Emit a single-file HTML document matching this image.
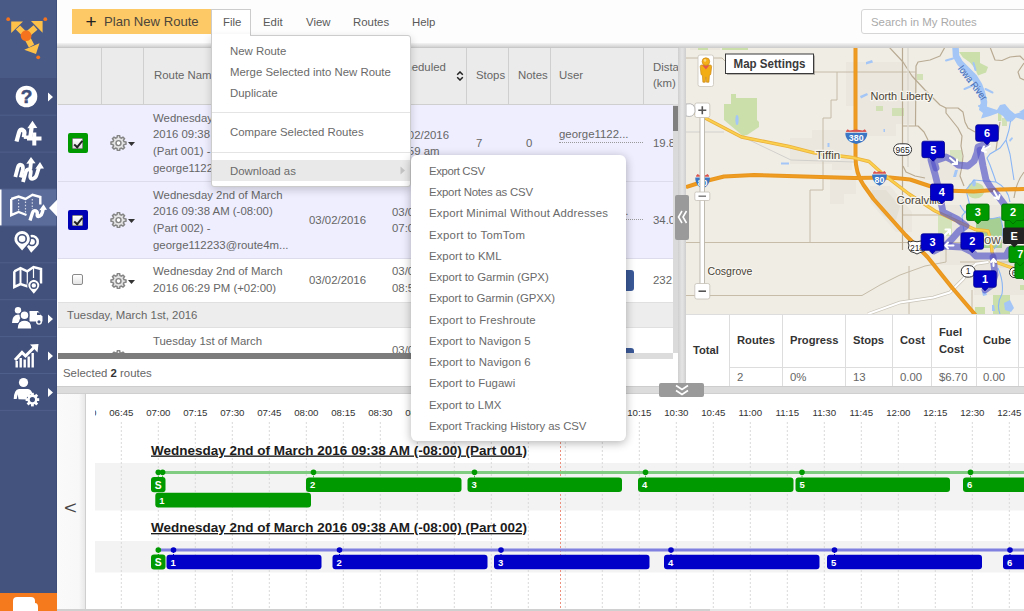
<!DOCTYPE html>
<html lang="en">
<head>
<meta charset="utf-8">
<title>Routes</title>
<style>
*{box-sizing:border-box;margin:0;padding:0}
html,body{width:1024px;height:611px;overflow:hidden;background:#fff}
body{font-family:"Liberation Sans",sans-serif;font-size:12px;color:#555;position:relative}
.abs{position:absolute}
.os{letter-spacing:0}
/* sidebar */
#side{overflow:hidden;left:0;top:0;width:57px;height:611px;background:#43537d}
#side .logo{left:0;top:0;width:58px;height:78px;background:#495a87}
#side .it{left:0;width:57px;height:37px;border-top:1px solid #4c5c88}
#side .it.act{background:#5d6c98}
#side .orange{left:0;top:593px;width:57px;height:18px;background:#f47a1f}
/* topbar */
#top{left:57px;top:0;width:967px;height:48px;background:#fdfdfd}
#top .shadow{left:0;top:43px;width:967px;height:5px;background:linear-gradient(#f4f4f4,#cacaca)}
#plan{left:72px;top:9px;width:139px;height:25px;background:#fdc866;color:#4c463a;font-size:13.1px;line-height:25px}
#filetab{left:211px;top:9px;width:40px;height:27px;background:#fff;border:1px solid #ccc;border-bottom:none}
.mi{top:9.5px;height:25px;line-height:25px;font-size:11.4px;color:#5a5a5a}
#search{left:861px;top:9px;width:170px;height:25px;border:1px solid #d6d6d6;border-radius:3px;background:#fff;color:#aaa;line-height:25px;padding-left:9px;font-size:11.4px}
/* table */
#tbl{left:57px;top:47px;width:622px;height:340px;background:linear-gradient(#c8c8c8 1px,#fff 1px);overflow:hidden}
#tblin{left:1px;top:0;width:621px;height:340px}
#thead{left:0;top:1px;width:621px;height:57px;background:#ebebeb;border-bottom:1px solid #cfcfcf;box-shadow:-1px 0 0 #ebebeb}
.vd{top:0;width:1px;height:56px;background:#cfcfcf}
.row{left:0;width:615px}
.lav{background:#eeeeff;box-shadow:-1px 0 0 #eeeeff}
.cell{position:absolute;line-height:21px;font-size:12px;color:#555;white-space:nowrap}
/* splitters */
#vsplit{left:678px;top:48px;width:8px;height:339px;background:linear-gradient(90deg,#cfcfcf,#e2e2e2 45%,#e2e2e2 60%,#cdcdcd)}
#vhandle{z-index:5;left:674.5px;top:194.5px;width:14.5px;height:45px;background:#9a9a9a;border-radius:2px;color:#fff}
#hsplit{left:57px;top:386px;width:967px;height:8px;background:#dcdcdc;border-top:1px solid #cdcdcd;border-bottom:1px solid #cfcfcf}
#hhandle{z-index:5;left:659px;top:383px;width:45px;height:14px;background:#9a9a9a;border-radius:2px}
/* map */
#map{left:686px;top:48px;width:338px;height:266px;background:#efebe2;overflow:hidden}
/* stats */
#stats{left:686px;top:314px;width:338px;height:72px;background:#fff}
/* gantt */
#gantt{left:57px;top:394px;width:967px;height:217px;background:#fff;overflow:hidden}
#gleft{left:0;top:0;width:29px;height:217px;background:linear-gradient(90deg,#fafafa 0,#f8f8f8 78%,#e8e8e8 100%);border-right:1px solid #cfcfcf}
/* menus */
#menu1{left:211px;top:35px;width:200px;height:152px;background:#fff;border:1px solid #ccc;border-radius:0 3px 3px 3px;box-shadow:0 3px 8px rgba(0,0,0,.18)}
#menu2{left:411px;top:155px;width:215px;height:286px;background:#fff;border-radius:6px;box-shadow:0 2px 10px rgba(0,0,0,.3)}
.m1{left:18px;font-size:12px;color:#666;line-height:20px;white-space:nowrap}
.m2{left:18px;font-size:12px;color:#666;line-height:20px;white-space:nowrap}

.t{font-size:11.4px;color:#666}
.u{border-bottom:1px dotted #999;line-height:15px !important;width:84px}
.cb{width:20px;height:20px;border-radius:2px}
.cb i{position:absolute;left:4px;top:5px;width:11px;height:11px;background:linear-gradient(#fff,#ddd);border:1px solid #888;border-radius:1px}
.cb i:after{content:"";position:absolute;left:2.5px;top:-0.5px;width:3px;height:6.5px;border:solid #222;border-width:0 2px 2px 0;transform:rotate(40deg)}
.cb0{width:11px;height:11px;background:linear-gradient(#fff,#e4e4e4);border:1px solid #8a8a8a;border-radius:2px}
.sb{font-size:11.200px;font-weight:bold;color:#333}
.m1,.m2{color:#6a6a6a}
</style>
</head>
<body>
<svg width="0" height="0" style="position:absolute"><defs>
<g id="gear"><path d="M7.4 0.6h2.2l.4 2 1.3.6 1.7-1.1 1.5 1.5-1.1 1.7.6 1.3 2 .4v2.2l-2 .4-.6 1.3 1.1 1.7-1.5 1.5-1.7-1.1-1.3.6-.4 2H7.400l-.4-2-1.3-.6-1.7 1.1-1.5-1.500 1.1-1.700-.6-1.300-2-.4V7l2-.4.6-1.300L2.500 3.600 4 2.100l1.700 1.100L7 2.600z" fill="#e4e4e4" stroke="#858585" stroke-width="1.500"/><circle cx="8.500" cy="8.100" r="2.500" fill="#fff" stroke="#858585" stroke-width="1.400"/><path d="M18 7h7l-3.500 4z" fill="#333"/></g>
</defs></svg>

<!-- TOP BAR -->
<div id="top" class="abs"><div class="shadow abs"></div></div>
<div id="plan" class="abs"><span class="abs" style="left:13.500px;top:-.5px;font-size:19px;color:#222">+</span><span class="abs os" style="left:32px;top:.4px;white-space:nowrap">Plan New Route</span></div>
<div id="filetab" class="abs"></div>
<div class="mi abs os" style="left:223px">File</div>
<div class="mi abs os" style="left:263px">Edit</div>
<div class="mi abs os" style="left:306px">View</div>
<div class="mi abs os" style="left:353px">Routes</div>
<div class="mi abs os" style="left:412px">Help</div>
<div id="search" class="abs os">Search in My Routes</div>

<!-- TABLE -->
<div id="tbl" class="abs"><div id="tblin" class="abs">
<div id="thead" class="abs">
 <div class="vd abs" style="left:43px"></div><div class="vd abs" style="left:85px"></div>
 <div class="vd abs" style="left:241px"></div><div class="vd abs" style="left:324px"></div>
 <div class="vd abs" style="left:408px"></div><div class="vd abs" style="left:450px"></div>
 <div class="vd abs" style="left:492px"></div><div class="vd abs" style="left:585px"></div>
 <div class="cell t" style="left:96px;top:16.8px">Route Name</div>
 <div class="cell t" style="left:251px;top:16.8px">Date</div>
 <div class="cell t" style="left:334px;top:11px;line-height:16px">Scheduled<br>For</div>
 <svg class="abs" style="left:397.5px;top:23px" width="8" height="10" viewBox="0 0 8 10"><path d="M1.2 3.800L4 1L6.800 3.800M1.200 6.200L4 9L6.800 6.200" fill="none" stroke="#222" stroke-width="1.500"/></svg>
 <div class="cell t" style="left:418px;top:16.8px">Stops</div>
 <div class="cell t" style="left:460px;top:16.8px">Notes</div>
 <div class="cell t" style="left:501px;top:16.8px">User</div>
 <div class="cell t" style="left:595px;top:11px;line-height:16px">Distance<br>(km)</div>
</div>

<!-- row 1 -->
<div class="row lav abs" style="top:58px;height:77px;border-bottom:1px solid #dcdcec">
 <div class="cb abs" style="left:10px;top:28px;background:#009a00"><i></i></div>
 <svg class="gear abs" style="left:52px;top:30px" width="26" height="16" viewBox="0 0 26 16"><use href="#gear"/></svg>
 <div class="cell t" style="left:95px;top:4.6px;line-height:16.7px">Wednesday 2nd of March<br>2016 09:38 AM (-08:00)<br>(Part 001) -<br>george112233@route4m...</div>
 <div class="cell t" style="left:251px;top:27.8px">03/02/2016</div>
 <div class="cell t" style="left:334px;top:21.5px;line-height:16.7px">03/02/2016<br>06:59 am</div>
 <div class="cell t" style="left:418px;top:27.8px">7</div>
 <div class="cell t" style="left:468px;top:27.8px">0</div>
 <div class="cell t u" style="left:501px;top:22.3px">george1122...</div>
 <div class="cell t" style="left:595px;top:27.8px">19.8</div>
</div>
<!-- row 2 -->
<div class="row lav abs" style="top:135px;height:77px;border-bottom:1px solid #dcdcec">
 <div class="cb abs" style="left:10px;top:28px;background:#0000b4"><i></i></div>
 <svg class="gear abs" style="left:52px;top:30px" width="26" height="16" viewBox="0 0 26 16"><use href="#gear"/></svg>
 <div class="cell t" style="left:95px;top:4.7px;line-height:16.7px">Wednesday 2nd of March<br>2016 09:38 AM (-08:00)<br>(Part 002) -<br>george112233@route4m...</div>
 <div class="cell t" style="left:251px;top:27.7px">03/02/2016</div>
 <div class="cell t" style="left:334px;top:21.5px;line-height:16.7px">03/02/2016<br>07:09 am</div>
 <div class="cell t" style="left:418px;top:27.7px">6</div>
 <div class="cell t" style="left:468px;top:27.7px">0</div>
 <div class="cell t u" style="left:501px;top:22.3px">george1122...</div>
 <div class="cell t" style="left:595px;top:27.7px">34.0</div>
</div>
<!-- row 3 -->
<div class="row abs" style="top:212px;height:43px;background:#fff">
 <div class="cb0 abs" style="left:14px;top:15px"></div>
 <svg class="gear abs" style="left:52px;top:14px" width="26" height="16" viewBox="0 0 26 16"><use href="#gear"/></svg>
 <div class="cell t" style="left:95px;top:4px;line-height:16.7px">Wednesday 2nd of March<br>2016 06:29 PM (+02:00)</div>
 <div class="cell t" style="left:251px;top:11px">03/02/2016</div>
 <div class="cell t" style="left:334px;top:4px;line-height:16.7px">03/02/2016<br>08:55 am</div>
 <div class="cell t" style="left:418px;top:11px">9</div>
 <div class="cell t" style="left:468px;top:11px">0</div>
 <div class="abs" style="left:501px;top:11px;width:75px;height:21px;background:#3b5998;border-radius:3px"></div>
 <div class="cell t" style="left:595px;top:11px">232.1</div>
</div>
<!-- group header -->
<div class="abs" style="left:0;top:255px;width:615px;height:26px;background:#ededed;border-top:1px solid #e0e0e0;border-bottom:1px solid #e0e0e0"><div class="cell t" style="left:9px;top:2px">Tuesday, March 1st, 2016</div></div>
<!-- row 4 -->
<div class="row abs" style="top:281px;height:30px;background:#fff">
 <svg class="gear abs" style="left:52px;top:22px" width="26" height="16" viewBox="0 0 26 16"><use href="#gear"/></svg>
 <div class="cell t" style="left:95px;top:3px">Tuesday 1st of March</div>
 <div class="cell t" style="left:334px;top:12px">03/01/2016</div>
 <div class="abs" style="left:501px;top:20px;width:75px;height:21px;background:#3b5998;border-radius:3px"></div>
</div>
<!-- scrollbars -->
<div class="abs" style="left:615px;top:57px;width:6px;height:249px;background:#dadada"></div>
<div class="abs" style="left:615px;top:59px;width:6px;height:25px;background:#808080"></div>
<div class="abs" style="left:0;top:306px;width:615px;height:6px;background:#dcdcdc"></div>
<div class="abs" style="left:0;top:306px;width:545px;height:6px;background:#7c7c7c"></div>
<!-- footer -->
<div class="abs" style="left:0;top:312px;width:621px;height:28px;background:#fff"><div class="cell t" style="left:5px;top:4px">Selected <b style="color:#333">2</b> routes</div></div>

</div></div>

<!-- MAP -->
<div id="map" class="abs">
<svg class="abs" style="left:0;top:0" width="338" height="266" viewBox="686 48 338 266" font-family="Liberation Sans, sans-serif">
<rect x="686" y="47" width="338" height="267" fill="#f0ede5"/>
<!-- urban patches -->
<g fill="#ebe7de">
<path d="M790 138h22v-8h40v40h-20v-6h-42z"/>
<path d="M846 62h60v12h10v50h-20v12h-40v-30h-10z"/>
<path d="M830 176h26v18h-12v10h-14z"/>
<path d="M870 186l20 0 22 26 0 20-16 0-26-30z"/>
<path d="M920 150h40v30h-40z"/>
<path d="M940 205h84v90h-50v-30h-34z"/>
<path d="M690 47h30v3h-30z"/>
</g>
<g fill="#e4e0d6"><path d="M872 190l14 0 14 16-4 14-12-4-12-16z"/><path d="M996 228h28v40h-28z"/></g>
<!-- parks -->
<g fill="#cadfaa">
<path d="M731 94h5v4h21v22l2 2v5l-12 8-4 1-19-16v-16h7z"/>
<path d="M959 52h21v11l8 4-2 5.500-8 3-3-7-5-6-7-5z"/>
<path d="M998 112h3.500v9h-3.500z"/>
<path d="M969 184q8-4 14 2 4 8-4 12-10 2-12-6z"/>
<path d="M950 150h12v14h-12z" opacity=".6"/>
<path d="M938 214h14v22h-14z" opacity=".7"/>
<path d="M976 218h26v30h-26z" fill="#a6cf94"/>
<path d="M993 295h17v19h-17zM1020 285h4v5h-4zM975 307h10v7h-10z"/>
<path d="M876 106h7v5h-7zM917 74h6v6h-6zM892 108h12v8h-12zM1002 118h5v8h-5z" opacity=".8"/>
<path d="M698 47h10v3h-10zM722 47h26v3h-26z"/>
</g>
<!-- water -->
<g fill="none" stroke="#a3c6f7" stroke-linejoin="round" stroke-linecap="round">
<path d="M955.500 47L956 56L960 63L967 70L974 77L979 85L982 93L984 102L983.500 108" stroke-width="6.500"/>
<path d="M946 60.500L953 58.500M975.500 70L973.500 63M964.500 89L975 84.500M992.500 92.500L985.500 89M979 106L983 107" stroke-width="2"/>
</g>
<g fill="#a3c6f7">
<path d="M980 104L988 107L997 110L1000 105L1005 104L1010 110L1015 114L1024 111V120L1016 117.500L1012 121.500L1007 121.500L1003 116L998 113L990 116L981 118.500L983 113L979 110z"/>
<path d="M1019 112l5-3v3z"/>
<ellipse cx="737" cy="120" rx="1.600" ry="5"/>
<path d="M866 62l6-2 1 2.500-7 2zM860 96l7-3 1 2-7 3.500zM781 162.500l8 0 0 2-8 0zM827.500 143l2 0 0 4-2 0zM883.500 129l1.500 0 0 3-1.500 0zM1009 140l3-3 1 1.500-3 3.500z"/>
<path d="M1004 303l6-3 4 8-3 4-6-2zM982 292l4 0 1 3-4 1zM992 305l2 0 1 6-3 0z"/>
<ellipse cx="974" cy="183" rx="1.800" ry="3.500"/>
<path d="M955 170l3 0-2 7-3 0z"/>
</g>
<!-- streams -->
<g fill="none" stroke="#8ab6f5" stroke-width="1.100">
<path d="M1010.500 121L1009 130L1006 140L1000 148L990 154L987 158L990 165L994 176l2 6"/>
<path d="M1006 140l4 14 4 26"/>
<path d="M996 182l-22-2-8 10 4 16-8 10 2 16"/>
<path d="M996 182q12 6 14 20"/>
<path d="M960 205q10 20 40 12 8 20-6 32"/>
<path d="M998 268q6 14 4 26-6 10-2 20"/>
</g>
<!-- thin roads / boundaries -->
<g fill="none" stroke="#c6bca8" stroke-width="1">
<path d="M686 58h36l3 3h20l10 11h160.500"/>
<path d="M837 72v28h-6v18h-8v60"/>
<path d="M686 242.500h338M686 295.500H862L880 285L900 275L925 266L946 262"/>
<path d="M810 242v-52h13v-14"/>
<path d="M946 242v20M909 266v48M972 290v24"/>
<path d="M903 215h40M960 262h64"/>
</g>
<g fill="none" stroke="#b9ab93" stroke-width="1.200" stroke-linejoin="round">
<path d="M902.500 47V250"/>
<path d="M945 47L940 56L930 60L918 62L916 66L915.500 126"/>
<path d="M889 47L903 62L912 76L925 90L940 105L946 108L958 108L963 112L965 122L968 128L975 132"/>
<path d="M946 108L946 113L950 118L958 128L962 136L961 146L963 156L962 166L960 176L964 186"/>
<path d="M903 126H918L924 132L928 140"/>
<path d="M903 166l3 6 9 4 10 2"/>
<path d="M990 47L995 60L1002 60.500L1010 57L1020 56L1024 60"/>
<path d="M1024 63L1018 72L1020 78L1024 80"/>
<path d="M1024 172q-8 10-10 26"/>
<path d="M1000 122l-4 28"/>
</g>
<path d="M908 47v120" fill="none" stroke="#dcd8d0" stroke-width="1.500"/>
<g fill="none" stroke="#d2d0cc" stroke-width="1"><path d="M686 132h38M745 138l46 22 64 2"/></g>
<!-- white secondary road -->
<path d="M868 314L900 302.500L933.500 297.500L949.800 292.500L958.500 283.800L963.500 278.800L968 271L976 263.800L988.500 262" fill="none" stroke="#c9c4b8" stroke-width="3.400"/>
<path d="M868 314L900 302.500L933.500 297.500L949.800 292.500L958.500 283.800L963.500 278.800L968 271L976 263.800L988.500 262" fill="none" stroke="#fff" stroke-width="2"/>
<!-- highways -->
<g fill="none" stroke-linejoin="round">
<g stroke="#e8961e" stroke-width="4">
<path d="M686 187l16-5 22-5.500 30-1.500 50 1.500 50 1.500 36-.5 20 2 18 6 16 5 30 1 26-2 24-.5"/>
<path d="M855.500 47v110q0 16 8 28l10 14 32 36 22 22 24 30 24 28"/>
</g>
<g stroke="#ee9c22" stroke-width="2">
<path d="M686 187l16-5 22-5.500 30-1.500 50 1.500 50 1.500 36-.5 20 2 18 6 16 5 30 1 26-2 24-.5"/>
<path d="M855.500 47v110q0 16 8 28l10 14 32 36 22 22 24 30 24 28"/>
</g>
<g stroke="#eab03c" stroke-width="3.400">
<path d="M686 108L741.5 137L789 146.500L814 152.800L854 157.800L869 161.500L881.500 172.800L909 194"/>
<path d="M909 194L935 211L975 229.500L988 231L991 240L992 252L995.500 262L1011 267.500L1024 272"/>
</g>
<g stroke="#fbd04e" stroke-width="1.900">
<path d="M686 108L741.5 137L789 146.500L814 152.800L854 157.800L869 161.500L881.500 172.800L909 194"/>
<path d="M909 194L935 211L975 229.500L988 231L991 240L992 252L995.500 262L1011 267.500L1024 272"/>
</g>
</g>
<g fill="none" stroke="#5252c8" stroke-opacity=".66" stroke-width="6.800" stroke-linejoin="round" stroke-linecap="round">
<path d="M936 168l-2-7 12-4 6 3 6 5 10 1 6-5 3-8 1-6 8-3"/>
<path d="M931 160l4 14 3 12 3 16 2 10 14 7 9 7-7 5-7 8-6 6-12 6"/>
<path d="M944 246l18 1 10 5 4 4h30l3-6"/>
<path d="M993 257l1 8 1 10-3 10-7 5"/>
<path d="M980 150l3 16 3 14 5 8 7 8 6 8 5 8"/>
</g>
<g fill="none" stroke="#fff" stroke-width="2" stroke-linecap="round" stroke-linejoin="round">
<path d="M950 158l7 6m-4.500 0h4.500v-4.500"/>
<path d="M990 146l-8 4.500m2-4l-2 4 4 1.500"/>
<path d="M994 191l4.500 8m-4-1.500l4 1.500 1.200-4"/>
<path d="M944 236l6-6m-4.500-.5h4.500v4.500"/>
<path d="M953.500 245.500h-8.500m3-3l-3 3 3 3"/>
<path d="M993.500 266v-7m-2.500 3l2.500-3 2.500 3"/>
</g>

<text x="870.5" y="99.5" font-size="11.6" fill="#4a4436" stroke="#f8f6f0" stroke-width="2.400" stroke-linejoin="round" paint-order="stroke" textLength="62.500" lengthAdjust="spacingAndGlyphs">North Liberty</text>
<text x="815.7" y="159.3" font-size="11.6" fill="#4a4436" stroke="#f8f6f0" stroke-width="2.400" stroke-linejoin="round" paint-order="stroke" textLength="24.500" lengthAdjust="spacingAndGlyphs">Tiffin</text>
<text x="896.6" y="204.3" font-size="11.6" fill="#4a4436" stroke="#f8f6f0" stroke-width="2.400" stroke-linejoin="round" paint-order="stroke" textLength="46.500" lengthAdjust="spacingAndGlyphs">Coralville</text>
<text x="707.4" y="275.2" font-size="11.6" fill="#4a4436" stroke="#f8f6f0" stroke-width="2.400" stroke-linejoin="round" paint-order="stroke" textLength="45" lengthAdjust="spacingAndGlyphs">Cosgrove</text>
<text x="980.4" y="243.6" font-size="13" fill="#5a564c" stroke="#f8f6f0" stroke-width="2.400" stroke-linejoin="round" paint-order="stroke" >Iow<tspan dx="4">a City</tspan></text>
<text font-size="10" fill="#4a6db0" stroke="#a3c6f7" stroke-width=".6" paint-order="stroke" transform="translate(957.500,68.500) rotate(53)" textLength="41" lengthAdjust="spacingAndGlyphs">Iowa River</text>
<g><path d="M696.1 175.8l1.5-1.800 2 1.200 3.0-1 3.0 1 2-1.200 1.500 1.800v1.200h-13.0z" fill="#d9534f"/><path d="M695.6 177.2h14.0" stroke="#fff" stroke-width=".8"/><path d="M695.3 177.6h14.6c.4 6-4 10-7.3 11.200c-3.3-1.200-7.7-5.200-7.3-11.200z" fill="#3a76c4"/><text x="702.6" y="185.6" font-size="8.800" font-weight="bold" fill="#fff" text-anchor="middle">80</text></g>
<g><path d="M846.1 131.0l1.5-1.800 2 1.200 6.6-1 6.6 1 2-1.200 1.500 1.800v1.200h-20.3z" fill="#d9534f"/><path d="M845.6 132.4h21.3" stroke="#fff" stroke-width=".8"/><path d="M845.3 132.8h21.9c.4 6-4 10-10.9 11.200c-6.9-1.200-11.3-5.200-10.9-11.200z" fill="#3a76c4"/><text x="856.2" y="140.8" font-size="8.800" font-weight="bold" fill="#fff" text-anchor="middle">380</text></g>
<g><path d="M873.0 172.8l1.5-1.800 2 1.200 3.0-1 3.0 1 2-1.200 1.500 1.800v1.200h-13.0z" fill="#d9534f"/><path d="M872.5 174.2h14.0" stroke="#fff" stroke-width=".8"/><path d="M872.2 174.6h14.6c.4 6-4 10-7.3 11.200c-3.3-1.200-7.7-5.200-7.3-11.200z" fill="#3a76c4"/><text x="879.5" y="182.6" font-size="8.800" font-weight="bold" fill="#fff" text-anchor="middle">80</text></g>
<g><rect x="893.6" y="143.8" width="18" height="11.5" rx="5.75" fill="#fff" stroke="#333" stroke-width="1"/><text x="902.6" y="152.7" font-size="8.500" fill="#222" text-anchor="middle">965</text></g>
<g><rect x="961.2" y="265.6" width="14" height="11.5" rx="5.75" fill="#fff" stroke="#333" stroke-width="1"/><text x="968.2" y="274.4" font-size="8.500" fill="#222" text-anchor="middle">1</text></g>
<g><rect x="1009.5" y="267.5" width="9" height="10" rx="5" fill="#fff" stroke="#333" stroke-width="1"/><text x="1014.0" y="275.6" font-size="8.500" fill="#222" text-anchor="middle">6</text></g>
<g><path d="M908.500 241q2 1.500 4.500 0 4 1.500 8 0 2.500 1.500 4.500 0 1 2-.5 4 2 3.500-1.500 6.500-4 1-6.500 2.500-2.500-1.500-6.500-2.500-3.500-3-1.500-6.500-1.500-2-.5-4z" fill="#fff" stroke="#333" stroke-width="1"/><text x="917" y="250.500" font-size="8.500" fill="#222" text-anchor="middle">218</text></g>
<g><path d="M1017.0 262.0h18.5a2 2 0 0 1 2 2v12.5a2 2 0 0 1-2 2h-5.8l-3.500 3.500-3.500-3.500h-5.8a2 2 0 0 1-2-2v-12.5a2 2 0 0 1 2-2z" fill="#009a00" stroke="#006a00" stroke-width=".8"/><text x="1026.2" y="274.3" font-size="11" font-weight="bold" fill="#fff" text-anchor="middle"></text></g>
<g><path d="M1007.0 212.0h18.5a2 2 0 0 1 2 2v12.5a2 2 0 0 1-2 2h-5.8l-3.500 3.500-3.500-3.500h-5.8a2 2 0 0 1-2-2v-12.5a2 2 0 0 1 2-2z" fill="#009a00" stroke="#006a00" stroke-width=".8"/><text x="1016.2" y="224.3" font-size="11" font-weight="bold" fill="#fff" text-anchor="middle"></text></g>
<g><path d="M1011.0 246.0h18.5a2 2 0 0 1 2 2v12.5a2 2 0 0 1-2 2h-5.8l-3.500 3.500-3.500-3.500h-5.8a2 2 0 0 1-2-2v-12.5a2 2 0 0 1 2-2z" fill="#009a00" stroke="#006a00" stroke-width=".8"/><text x="1020.2" y="258.3" font-size="11" font-weight="bold" fill="#fff" text-anchor="middle">7</text></g>
<g><path d="M1003.8 204.0h18.5a2 2 0 0 1 2 2v12.5a2 2 0 0 1-2 2h-5.8l-3.500 3.500-3.500-3.500h-5.8a2 2 0 0 1-2-2v-12.5a2 2 0 0 1 2-2z" fill="#009a00" stroke="#006a00" stroke-width=".8"/><text x="1013.0" y="216.3" font-size="11" font-weight="bold" fill="#fff" text-anchor="middle">2</text></g>
<g><path d="M968.6 204.0h18.5a2 2 0 0 1 2 2v12.5a2 2 0 0 1-2 2h-5.8l-3.500 3.500-3.500-3.500h-5.8a2 2 0 0 1-2-2v-12.5a2 2 0 0 1 2-2z" fill="#009a00" stroke="#006a00" stroke-width=".8"/><text x="977.9" y="216.3" font-size="11" font-weight="bold" fill="#fff" text-anchor="middle">3</text></g>
<g><path d="M1005.0 227.4h18.5a2 2 0 0 1 2 2v12.5a2 2 0 0 1-2 2h-5.8l-3.500 3.500-3.500-3.500h-5.8a2 2 0 0 1-2-2v-12.5a2 2 0 0 1 2-2z" fill="#222"/><text x="1014.2" y="239.7" font-size="11" font-weight="bold" fill="#fff" text-anchor="middle">E</text></g>
<g><path d="M924.0 141.2h18.5a2 2 0 0 1 2 2v12.5a2 2 0 0 1-2 2h-5.8l-3.500 3.500-3.500-3.500h-5.8a2 2 0 0 1-2-2v-12.5a2 2 0 0 1 2-2z" fill="#0000c8" stroke="#00008c" stroke-width=".8"/><text x="933.2" y="153.5" font-size="11" font-weight="bold" fill="#fff" text-anchor="middle">5</text></g>
<g><path d="M977.8 124.8h18.5a2 2 0 0 1 2 2v12.5a2 2 0 0 1-2 2h-5.8l-3.500 3.500-3.500-3.500h-5.8a2 2 0 0 1-2-2v-12.5a2 2 0 0 1 2-2z" fill="#0000c8" stroke="#00008c" stroke-width=".8"/><text x="987.0" y="137.1" font-size="11" font-weight="bold" fill="#fff" text-anchor="middle">6</text></g>
<g><path d="M932.6 184.0h18.5a2 2 0 0 1 2 2v12.5a2 2 0 0 1-2 2h-5.8l-3.500 3.500-3.500-3.500h-5.8a2 2 0 0 1-2-2v-12.5a2 2 0 0 1 2-2z" fill="#0000c8" stroke="#00008c" stroke-width=".8"/><text x="941.9" y="196.3" font-size="11" font-weight="bold" fill="#fff" text-anchor="middle">4</text></g>
<g><path d="M923.2 233.8h18.5a2 2 0 0 1 2 2v12.5a2 2 0 0 1-2 2h-5.8l-3.500 3.500-3.500-3.500h-5.8a2 2 0 0 1-2-2v-12.5a2 2 0 0 1 2-2z" fill="#0000c8" stroke="#00008c" stroke-width=".8"/><text x="932.5" y="246.1" font-size="11" font-weight="bold" fill="#fff" text-anchor="middle">3</text></g>
<g><path d="M963.0 232.7h18.5a2 2 0 0 1 2 2v12.5a2 2 0 0 1-2 2h-5.8l-3.500 3.500-3.500-3.500h-5.8a2 2 0 0 1-2-2v-12.5a2 2 0 0 1 2-2z" fill="#0000c8" stroke="#00008c" stroke-width=".8"/><text x="972.2" y="245.0" font-size="11" font-weight="bold" fill="#fff" text-anchor="middle">2</text></g>
<g><path d="M975.8 270.8h18.5a2 2 0 0 1 2 2v12.5a2 2 0 0 1-2 2h-5.8l-3.500 3.500-3.500-3.500h-5.8a2 2 0 0 1-2-2v-12.5a2 2 0 0 1 2-2z" fill="#0000c8" stroke="#00008c" stroke-width=".8"/><text x="985.0" y="283.1" font-size="11" font-weight="bold" fill="#fff" text-anchor="middle">1</text></g>

<g>
<rect x="698" y="55" width="15.500" height="31.500" rx="2" fill="#fff" stroke="#c9c4ba" stroke-width=".8"/>
<path d="M700.200 66.500q0-1.500 1.500-1.500h8.400q1.500 0 1.500 1.500l-.8 7.500q-.2 1.200-1.400 1.200l-.5 7h-2.400l-.3-5h-.6l-.3 5h-2.400l-.5-7q-1.200 0-1.400-1.200z" fill="#f3ad14" stroke="#c9861a" stroke-width=".7"/>
<path d="M702.300 65.200h7.200l-3.600 4.200z" fill="#e2584c"/>
<circle cx="705.900" cy="61.600" r="3.800" fill="#f4b016" stroke="#c9861a" stroke-width=".7"/><circle cx="705" cy="60.400" r="1.300" fill="#fcd67a"/>
<rect x="727" y="55.500" width="88" height="19.500" fill="#000" opacity=".25"/><rect x="725.500" y="54" width="88" height="19.500" fill="#fff" stroke="#3a3a3a" stroke-width="1"/>
<text x="733.500" y="68" font-size="12" font-weight="bold" fill="#3a3a3a" textLength="72" lengthAdjust="spacingAndGlyphs">Map Settings</text>
<rect x="700" y="112" width="4.500" height="176" fill="#fff" stroke="#b9b4aa" stroke-width=".9"/>
<rect x="694.800" y="103" width="15" height="14.500" rx="2" fill="#fff" stroke="#c4bfb5" stroke-width=".8"/>
<path d="M698.300 110.200h8M702.300 106.200v8" stroke="#555" stroke-width="1.600"/>
<rect x="694.800" y="192" width="15" height="8.500" rx="1.500" fill="#fff" stroke="#c4bfb5" stroke-width=".8"/>
<path d="M698.500 196.200h7.500" stroke="#777" stroke-width="1.400"/>
<rect x="694.800" y="283.500" width="15" height="15.500" rx="2" fill="#fff" stroke="#c4bfb5" stroke-width=".8"/>
<path d="M698.500 291.200h7.500" stroke="#555" stroke-width="1.600"/>
<path d="M686 104q10-2 9 8-2 6-9 4z" fill="#fff" stroke="#aaa" stroke-width=".8"/>
</g>

</svg>

</div>

<!-- STATS -->
<div id="stats" class="abs">
<div class="abs" style="left:0;top:0;width:338px;height:1px;background:#ddd"></div>
<div class="abs" style="left:43px;top:0;width:1px;height:72px;background:#ddd"></div>
<div class="abs" style="left:96px;top:0;width:1px;height:72px;background:#ddd"></div>
<div class="abs" style="left:159px;top:0;width:1px;height:72px;background:#ddd"></div>
<div class="abs" style="left:206px;top:0;width:1px;height:72px;background:#ddd"></div>
<div class="abs" style="left:245px;top:0;width:1px;height:72px;background:#ddd"></div>
<div class="abs" style="left:290px;top:0;width:1px;height:72px;background:#ddd"></div>
<div class="abs" style="left:332px;top:0;width:1px;height:72px;background:#ddd"></div>
<div class="abs" style="left:43px;top:53px;width:296px;height:1px;background:#ddd"></div>
<div class="cell sb" style="left:7px;top:26px">Total</div>
<div class="cell sb" style="left:51px;top:16px">Routes</div>
<div class="cell sb" style="left:104px;top:16px">Progress</div>
<div class="cell sb" style="left:167px;top:16px">Stops</div>
<div class="cell sb" style="left:214px;top:16px">Cost</div>
<div class="cell sb" style="left:297px;top:16px">Cube</div>
<div class="cell sb" style="left:253px;top:10px;line-height:17px">Fuel<br>Cost</div>
<div class="cell t" style="left:51px;top:53px">2</div>
<div class="cell t" style="left:104px;top:53px">0%</div>
<div class="cell t" style="left:167px;top:53px">13</div>
<div class="cell t" style="left:214px;top:53px">0.00</div>
<div class="cell t" style="left:253px;top:53px">$6.70</div>
<div class="cell t" style="left:297px;top:53px">0.00</div>
</div>

<!-- SPLITTERS -->
<div id="vsplit" class="abs"></div>
<div id="hsplit" class="abs"></div>
<div id="vhandle" class="abs"><svg class="abs" style="left:2px;top:14px" width="11" height="16" viewBox="0 0 11 16"><path d="M5 2L1.500 8L5 14M9.500 2L6 8L9.500 14" fill="none" stroke="#fff" stroke-width="1.600"/></svg></div>
<div id="hhandle" class="abs"><svg class="abs" style="left:15px;top:1px" width="16" height="13" viewBox="0 0 16 13"><path d="M2 1.500L8 5.500L14 1.500M2 6.500L8 10.500L14 6.500" fill="none" stroke="#fff" stroke-width="1.600"/></svg></div>

<!-- GANTT -->
<div id="gantt" class="abs">
<div id="gleft" class="abs"></div>
<svg class="abs" style="left:0;top:0" width="967" height="217" viewBox="0 0 967 217" font-family="Liberation Sans, sans-serif">
<rect x="38" y="69" width="930" height="47.5" fill="#f3f3f3"/>
<rect x="38" y="147" width="930" height="31.5" fill="#f3f3f3"/>
<line x1="64.3" y1="28" x2="64.3" y2="217" stroke="#d9d9d9" stroke-width="1" stroke-dasharray="2,2"/>
<line x1="101.3" y1="28" x2="101.3" y2="217" stroke="#d9d9d9" stroke-width="1" stroke-dasharray="2,2"/>
<line x1="138.3" y1="28" x2="138.3" y2="217" stroke="#d9d9d9" stroke-width="1" stroke-dasharray="2,2"/>
<line x1="175.3" y1="28" x2="175.3" y2="217" stroke="#d9d9d9" stroke-width="1" stroke-dasharray="2,2"/>
<line x1="212.3" y1="28" x2="212.3" y2="217" stroke="#d9d9d9" stroke-width="1" stroke-dasharray="2,2"/>
<line x1="249.3" y1="28" x2="249.3" y2="217" stroke="#d9d9d9" stroke-width="1" stroke-dasharray="2,2"/>
<line x1="286.3" y1="28" x2="286.3" y2="217" stroke="#d9d9d9" stroke-width="1" stroke-dasharray="2,2"/>
<line x1="323.3" y1="28" x2="323.3" y2="217" stroke="#d9d9d9" stroke-width="1" stroke-dasharray="2,2"/>
<line x1="360.3" y1="28" x2="360.3" y2="217" stroke="#d9d9d9" stroke-width="1" stroke-dasharray="2,2"/>
<line x1="397.3" y1="28" x2="397.3" y2="217" stroke="#d9d9d9" stroke-width="1" stroke-dasharray="2,2"/>
<line x1="434.3" y1="28" x2="434.3" y2="217" stroke="#d9d9d9" stroke-width="1" stroke-dasharray="2,2"/>
<line x1="471.3" y1="28" x2="471.3" y2="217" stroke="#d9d9d9" stroke-width="1" stroke-dasharray="2,2"/>
<line x1="508.3" y1="28" x2="508.3" y2="217" stroke="#d9d9d9" stroke-width="1" stroke-dasharray="2,2"/>
<line x1="545.3" y1="28" x2="545.3" y2="217" stroke="#d9d9d9" stroke-width="1" stroke-dasharray="2,2"/>
<line x1="582.3" y1="28" x2="582.3" y2="217" stroke="#d9d9d9" stroke-width="1" stroke-dasharray="2,2"/>
<line x1="619.3" y1="28" x2="619.3" y2="217" stroke="#d9d9d9" stroke-width="1" stroke-dasharray="2,2"/>
<line x1="656.3" y1="28" x2="656.3" y2="217" stroke="#d9d9d9" stroke-width="1" stroke-dasharray="2,2"/>
<line x1="693.3" y1="28" x2="693.3" y2="217" stroke="#d9d9d9" stroke-width="1" stroke-dasharray="2,2"/>
<line x1="730.3" y1="28" x2="730.3" y2="217" stroke="#d9d9d9" stroke-width="1" stroke-dasharray="2,2"/>
<line x1="767.3" y1="28" x2="767.3" y2="217" stroke="#d9d9d9" stroke-width="1" stroke-dasharray="2,2"/>
<line x1="804.3" y1="28" x2="804.3" y2="217" stroke="#d9d9d9" stroke-width="1" stroke-dasharray="2,2"/>
<line x1="841.3" y1="28" x2="841.3" y2="217" stroke="#d9d9d9" stroke-width="1" stroke-dasharray="2,2"/>
<line x1="878.3" y1="28" x2="878.3" y2="217" stroke="#d9d9d9" stroke-width="1" stroke-dasharray="2,2"/>
<line x1="915.3" y1="28" x2="915.3" y2="217" stroke="#d9d9d9" stroke-width="1" stroke-dasharray="2,2"/>
<line x1="952.3" y1="28" x2="952.3" y2="217" stroke="#d9d9d9" stroke-width="1" stroke-dasharray="2,2"/>
<line x1="503.5" y1="28" x2="503.5" y2="217" stroke="#ec8f7c" stroke-width="1" stroke-dasharray="2,2"/>
<clipPath id="lc"><rect x="38" y="0" width="940" height="40"/></clipPath>
<g clip-path="url(#lc)" font-size="9.700" fill="#333" text-anchor="middle">
<text x="27.3" y="21.9">06:30</text>
<text x="64.3" y="21.9">06:45</text>
<text x="101.3" y="21.9">07:00</text>
<text x="138.3" y="21.9">07:15</text>
<text x="175.3" y="21.9">07:30</text>
<text x="212.3" y="21.9">07:45</text>
<text x="249.3" y="21.9">08:00</text>
<text x="286.3" y="21.9">08:15</text>
<text x="323.3" y="21.9">08:30</text>
<text x="360.3" y="21.9">08:45</text>
<text x="397.3" y="21.9">09:00</text>
<text x="434.3" y="21.9">09:15</text>
<text x="471.3" y="21.9">09:30</text>
<text x="508.3" y="21.9">09:45</text>
<text x="545.3" y="21.9">10:00</text>
<text x="582.3" y="21.9">10:15</text>
<text x="619.3" y="21.9">10:30</text>
<text x="656.3" y="21.9">10:45</text>
<text x="693.3" y="21.9">11:00</text>
<text x="730.3" y="21.9">11:15</text>
<text x="767.3" y="21.9">11:30</text>
<text x="804.3" y="21.9">11:45</text>
<text x="841.3" y="21.9">12:00</text>
<text x="878.3" y="21.9">12:15</text>
<text x="915.3" y="21.9">12:30</text>
<text x="952.3" y="21.9">12:45</text>
</g>
<text x="94" y="60.5" font-size="13.5" font-weight="bold" fill="#1c1c1c" text-decoration="underline" textLength="376" lengthAdjust="spacingAndGlyphs">Wednesday 2nd of March 2016 09:38 AM (-08:00) (Part 001)</text>
<text x="94" y="138" font-size="13.5" font-weight="bold" fill="#1c1c1c" text-decoration="underline" textLength="376" lengthAdjust="spacingAndGlyphs">Wednesday 2nd of March 2016 09:38 AM (-08:00) (Part 002)</text>
<rect x="100" y="77" width="880" height="3" fill="#80cc80"/>
<line x1="101.3" y1="78.3" x2="101.3" y2="84.3" stroke="#009a00" stroke-width="1" stroke-dasharray="1,1"/>
<circle cx="101.3" cy="78.3" r="2.8" fill="#009a00"/>
<line x1="105.6" y1="78.3" x2="105.6" y2="84.3" stroke="#009a00" stroke-width="1" stroke-dasharray="1,1"/>
<circle cx="105.6" cy="78.3" r="2.8" fill="#009a00"/>
<line x1="256.5" y1="78.3" x2="256.5" y2="84.3" stroke="#009a00" stroke-width="1" stroke-dasharray="1,1"/>
<circle cx="256.5" cy="78.3" r="2.8" fill="#009a00"/>
<line x1="417.5" y1="78.3" x2="417.5" y2="84.3" stroke="#009a00" stroke-width="1" stroke-dasharray="1,1"/>
<circle cx="417.5" cy="78.3" r="2.8" fill="#009a00"/>
<line x1="588.5" y1="78.3" x2="588.5" y2="84.3" stroke="#009a00" stroke-width="1" stroke-dasharray="1,1"/>
<circle cx="588.5" cy="78.3" r="2.8" fill="#009a00"/>
<line x1="745" y1="78.3" x2="745" y2="84.3" stroke="#009a00" stroke-width="1" stroke-dasharray="1,1"/>
<circle cx="745" cy="78.3" r="2.8" fill="#009a00"/>
<line x1="913.5" y1="78.3" x2="913.5" y2="84.3" stroke="#009a00" stroke-width="1" stroke-dasharray="1,1"/>
<circle cx="913.5" cy="78.3" r="2.8" fill="#009a00"/>
<rect x="94" y="83" width="14.5" height="15.3" rx="3" fill="#009a00"/>
<text x="97.8" y="94.6" font-size="10.300" font-weight="bold" fill="#fff">S</text>
<rect x="249" y="83.5" width="155.5" height="14.5" rx="3" fill="#009a00"/>
<text x="253.0" y="94.3" font-size="9.5" font-weight="bold" fill="#fff">2</text>
<rect x="410.5" y="83.5" width="154.5" height="14.5" rx="3" fill="#009a00"/>
<text x="414.5" y="94.3" font-size="9.5" font-weight="bold" fill="#fff">3</text>
<rect x="581" y="83.5" width="155.5" height="14.5" rx="3" fill="#009a00"/>
<text x="585.0" y="94.3" font-size="9.5" font-weight="bold" fill="#fff">4</text>
<rect x="738.5" y="83.5" width="154.5" height="14.5" rx="3" fill="#009a00"/>
<text x="742.5" y="94.3" font-size="9.5" font-weight="bold" fill="#fff">5</text>
<rect x="906" y="83.5" width="77" height="14.5" rx="3" fill="#009a00"/>
<text x="910.0" y="94.3" font-size="9.5" font-weight="bold" fill="#fff">6</text>
<rect x="98.3" y="98.8" width="155.7" height="14.6" rx="3" fill="#009a00"/>
<text x="102.3" y="109.7" font-size="9.5" font-weight="bold" fill="#fff">1</text>
<rect x="100" y="154.5" width="880" height="3" fill="#8080e0"/>
<line x1="101.3" y1="156" x2="101.3" y2="162" stroke="#009a00" stroke-width="1" stroke-dasharray="1,1"/>
<circle cx="101.3" cy="156" r="2.8" fill="#009a00"/>
<line x1="116.5" y1="156" x2="116.5" y2="162" stroke="#0000c8" stroke-width="1" stroke-dasharray="1,1"/>
<circle cx="116.5" cy="156" r="2.8" fill="#0000c8"/>
<line x1="282.5" y1="156" x2="282.5" y2="162" stroke="#0000c8" stroke-width="1" stroke-dasharray="1,1"/>
<circle cx="282.5" cy="156" r="2.8" fill="#0000c8"/>
<line x1="444" y1="156" x2="444" y2="162" stroke="#0000c8" stroke-width="1" stroke-dasharray="1,1"/>
<circle cx="444" cy="156" r="2.8" fill="#0000c8"/>
<line x1="614" y1="156" x2="614" y2="162" stroke="#0000c8" stroke-width="1" stroke-dasharray="1,1"/>
<circle cx="614" cy="156" r="2.8" fill="#0000c8"/>
<line x1="777.5" y1="156" x2="777.5" y2="162" stroke="#0000c8" stroke-width="1" stroke-dasharray="1,1"/>
<circle cx="777.5" cy="156" r="2.8" fill="#0000c8"/>
<line x1="953" y1="156" x2="953" y2="162" stroke="#0000c8" stroke-width="1" stroke-dasharray="1,1"/>
<circle cx="953" cy="156" r="2.8" fill="#0000c8"/>
<rect x="94" y="160.5" width="14.5" height="15" rx="3" fill="#009a00"/>
<text x="97.8" y="171.8" font-size="10.300" font-weight="bold" fill="#fff">S</text>
<rect x="109.5" y="160.8" width="155" height="14.5" rx="3" fill="#0000c8"/>
<text x="113.5" y="171.6" font-size="9.5" font-weight="bold" fill="#fff">1</text>
<rect x="275.5" y="160.8" width="155" height="14.5" rx="3" fill="#0000c8"/>
<text x="279.5" y="171.6" font-size="9.5" font-weight="bold" fill="#fff">2</text>
<rect x="437" y="160.8" width="155.5" height="14.5" rx="3" fill="#0000c8"/>
<text x="441.0" y="171.6" font-size="9.5" font-weight="bold" fill="#fff">3</text>
<rect x="607" y="160.8" width="155.5" height="14.5" rx="3" fill="#0000c8"/>
<text x="611.0" y="171.6" font-size="9.5" font-weight="bold" fill="#fff">4</text>
<rect x="770" y="160.8" width="155" height="14.5" rx="3" fill="#0000c8"/>
<text x="774.0" y="171.6" font-size="9.5" font-weight="bold" fill="#fff">5</text>
<rect x="946" y="160.8" width="37" height="14.5" rx="3" fill="#0000c8"/>
<text x="950.0" y="171.6" font-size="9.5" font-weight="bold" fill="#fff">6</text>
<rect x="0" y="215" width="967" height="2" fill="#e6e6e6"/>
<rect x="0" y="215" width="653" height="2" fill="#d0d0d0"/>
</svg>
<div class="abs" style="left:7px;top:101px;font-size:22px;color:#444;font-family:'Liberation Sans',sans-serif;transform:scaleY(.8)">&lt;</div>
</div>

<!-- SIDEBAR -->
<div id="side" class="abs">
<div class="logo abs"></div>
<svg class="abs" style="left:0;top:0" width="58" height="611" viewBox="0 0 58 611">
<rect x="0" y="78.300" width="58" height="332.500" fill="#42517b"/>
<rect x="0" y="189" width="58" height="37" fill="#5b6c9b"/>
<rect x="0" y="189" width="1.500" height="37" fill="#fff"/>
<g stroke="#4f5f8b" stroke-width="1"><path d="M0 115.200h58M0 152.100h58M0 189h58M0 225.900h58M0 262.800h58M0 299.700h58M0 336.600h58M0 373.500h58M0 410.400h58"/></g>
<rect x="56" y="0" width="1" height="611" fill="#3a4974" opacity=".6"/>
<!-- logo -->
<g>
<g stroke="#fdc14a" stroke-width="6" fill="none"><path d="M26 35.500L18 27.500M26 35.500L35.500 27.500M26 35.500L31.500 46"/></g>
<g fill="#fdc14a"><path d="M11.200 21.400H23L11.200 32.900zM42.600 21.100V32.700L31 21.100zM36 54L24.200 49.700L39.500 43.200z"/></g>
<circle cx="26.100" cy="35.700" r="5.400" fill="#f4731c"/>
<g fill="#f4731c"><circle cx="8.200" cy="19.200" r="1.900"/><circle cx="45.300" cy="19.200" r="1.900"/><circle cx="38.200" cy="57.300" r="1.900"/></g>
</g>
<!-- help -->
<circle cx="26.500" cy="96.500" r="10.800" fill="#fff"/>
<text x="26.500" y="103.300" font-family="Liberation Sans, sans-serif" font-size="19" font-weight="bold" fill="#3f4f7a" stroke="#3f4f7a" stroke-width=".5" text-anchor="middle">?</text>
<g fill="#fff"><path d="M48 92.500l5 4.500-5 4.500zM48 314.500l5 4.500-5 4.500zM48 351.500l5 4.500-5 4.500zM48 388l5 4.500-5 4.500z"/>
<path d="M57 199.700v16.800l-8-8.400z"/></g>
<!-- route + -->
<g fill="none" stroke="#fff" stroke-width="4.200" stroke-linecap="butt" stroke-linejoin="round">
<path d="M16.500 141.500L19 132.500Q20 128.800 22.500 129.800Q25 131 24.300 134L23.800 137.200"/>
<path d="M30.300 137L31.800 126"/>
</g>
<path d="M23.800 137.200h6.500" stroke="#fff" stroke-width="3.400" fill="none"/>
<path d="M32.500 120.800L27.300 128.300L37.300 128z" fill="#fff"/>
<path d="M27 138.500h14.500M34.300 132.500v13" stroke="#fff" stroke-width="4" fill="none"/>
<!-- routes -->
<g fill="none" stroke="#fff" stroke-width="3.800" stroke-linecap="butt" stroke-linejoin="round">
<path d="M15.300 177L17.800 167.500Q18.800 164 21.300 165Q23.500 166.200 22.800 169.500L20.800 177.500"/>
<path d="M23 182L25.800 172Q26.800 168.800 29.200 169.600Q31.200 170.500 30.700 173L30.200 176Q30 179.200 33 178.700Q35.800 178 36.600 175L39.300 166.500"/>
<path d="M30.300 169L31 161.500"/>
</g>
<path d="M31 157L26.300 163.800L35.600 163.300zM40 162L35.300 168.800L44 168.600z" fill="#fff"/>
<!-- map route (active) -->
<g fill="none" stroke="#fff" stroke-width="2.400" stroke-linejoin="miter">
<path d="M11.200 199L18.600 196.600L25.500 199L32.500 194.800L40.300 197V204.500M11.200 199V215.200L18.600 212L26.500 215"/>
</g>
<g stroke="#fff" stroke-width="1.200" stroke-dasharray="1.600,1.600" opacity=".75"><path d="M18.600 199.500v11M25.500 201.500v11M32.300 199v10"/></g>
<g fill="none" stroke="#fff" stroke-width="3.400" stroke-linecap="butt" stroke-linejoin="round"><path d="M30 220.500L32.500 212.800Q33.500 210 35.700 210.800Q37.700 211.800 37.200 214Q36.700 217.200 39.500 216.200Q41.700 215 42.300 212.500L43.300 208.500"/></g>
<path d="M43.500 204.300L39.300 210.300L47 209.800z" fill="#fff"/>
<!-- pins -->
<path d="M31.2 252.8L26.3 245.8A7.0 7.0 0 1 1 37.7 245.8Z" fill="#fff"/><circle cx="32.0" cy="241.8" r="3.70" fill="none" stroke="#42517b" stroke-width="1.60"/>
<path d="M22.1 250.4L15.8 243.2A7.7 7.7 0 1 1 28.4 243.2Z" fill="#42517b" stroke="#42517b" stroke-width="2.600" stroke-linejoin="round"/><path d="M22.1 250.4L15.8 243.2A7.7 7.7 0 1 1 28.4 243.2Z" fill="#fff"/><circle cx="22.1" cy="238.8" r="4.10" fill="none" stroke="#42517b" stroke-width="1.60"/>
<!-- map pin -->
<g fill="none" stroke="#fff" stroke-width="2.500" stroke-linejoin="miter">
<path d="M14.300 271.300L20.500 268.200L27.300 271.300L33.500 267L41 269V283.500M14.300 271.300V287L20.500 284L28 286.500"/>
<path d="M20.500 268.500V284" stroke-width="2"/><path d="M33.500 267.500V278" stroke-width="1.200"/><path d="M27.300 271.500V285" stroke-width="1.200"/>
</g>
<path d="M33.8 293.8L29.5 288.4A5.3 5.3 0 1 1 38.1 288.4Z" fill="#42517b" stroke="#42517b" stroke-width="2.600" stroke-linejoin="round"/><path d="M33.8 293.8L29.5 288.4A5.3 5.3 0 1 1 38.1 288.4Z" fill="#fff"/><circle cx="33.8" cy="285.4" r="2.85" fill="none" stroke="#42517b" stroke-width="1.30"/>
<!-- team truck -->
<g fill="#fff">
<path d="M29.500 311h8.500l3.500 4.500 1 .8v5.200h-13z"/>
<circle cx="18" cy="310.300" r="3.200"/>
<path d="M12 323q0-8 6-8.500 3 .2 4 2-3 2-3 6.500z"/>
</g>
<circle cx="39" cy="321.800" r="2.300" fill="#3f4f7a" stroke="#fff" stroke-width="1.400"/>
<path d="M37 312.500h2.200l1.800 2.500h-4z" fill="#3f4f7a"/>
<circle cx="24.500" cy="315.200" r="4.400" fill="#fff" stroke="#3f4f7a" stroke-width="1.200"/>
<path d="M17 329q0-8.500 7.500-9 7.500.5 7.500 9z" fill="#fff" stroke="#3f4f7a" stroke-width="1.200"/>
<!-- chart -->
<g fill="#fff">
<path d="M15.500 367.500v-6.500h2.400v6.500zM19.500 367.500v-9.500h2.400v9.500zM23.500 367.500v-8h2.400v8zM27.500 367.500v-11h2.400v11zM31.500 367.500v-14.500h2.400v14.500z"/>
<path d="M30 344.500l8.500-.5-1 8.500z"/>
</g>
<path d="M15 360l7-7.500 3.500 3.500 9-9" fill="none" stroke="#fff" stroke-width="3"/>
<!-- person gear -->
<g fill="#fff">
<circle cx="23.500" cy="382.500" r="4.600"/>
<path d="M13.700 399q.3-9.500 5.300-10h9q3.500.5 4.500 5-6 1-6 5.500l-8-.2-.8-5-1 4.700z"/>
</g>
<g transform="translate(32.400,399.600)">
<g fill="#fff"><rect x="-1.400" y="-6.800" width="2.800" height="13.600"/><rect x="-1.400" y="-6.800" width="2.800" height="13.600" transform="rotate(45)"/><rect x="-1.400" y="-6.800" width="2.800" height="13.600" transform="rotate(90)"/><rect x="-1.400" y="-6.800" width="2.800" height="13.600" transform="rotate(135)"/><circle r="5"/></g>
<circle r="2.600" fill="#3f4f7a"/>
</g>
<!-- bottom orange -->
<rect x="0" y="593" width="58" height="18" fill="#f57a1d"/>
<path d="M13 611v-10q0-4 4-4h14q4 0 4 4v10z" fill="#fff"/>
<path d="M35 603q3 0 3 4v4h-3z" fill="#fff"/>
</svg>


</div>

<!-- MENUS -->
<div id="menu1" class="abs">
<div class="m1 abs t" style="top:5px">New Route</div>
<div class="m1 abs t" style="top:26px">Merge Selected into New Route</div>
<div class="m1 abs t" style="top:47px">Duplicate</div>
<div class="abs" style="left:0;top:76px;width:198px;height:1px;background:#e4e4e4"></div>
<div class="m1 abs t" style="top:86px">Compare Selected Routes</div>
<div class="abs" style="left:0;top:116px;width:198px;height:1px;background:#e4e4e4"></div>
<div class="abs" style="left:0;top:124px;width:198px;height:20.5px;background:#e9e9e9"></div>
<div class="m1 abs t" style="top:124.5px">Download as</div>
<svg class="abs" style="left:188px;top:130px" width="6" height="9" viewBox="0 0 6 9"><path d="M0.500 0.500L5 4.500L0.500 8.500z" fill="#c4c4c4"/></svg>

</div>
<div class="abs" style="left:212px;top:34px;width:38px;height:3px;background:#fff"></div>
<div id="menu2" class="abs">
<div class="m2 abs t" style="top:5.8px;letter-spacing:-0.389px">Export CSV</div>
<div class="m2 abs t" style="top:27.1px;letter-spacing:-0.200px">Export Notes as CSV</div>
<div class="m2 abs t" style="top:48.3px;letter-spacing:0.177px">Export Minimal Without Addresses</div>
<div class="m2 abs t" style="top:69.5px;letter-spacing:0.293px">Export to TomTom</div>
<div class="m2 abs t" style="top:90.8px;letter-spacing:0.025px">Export to KML</div>
<div class="m2 abs t" style="top:112.0px;letter-spacing:-0.057px">Export to Garmin (GPX)</div>
<div class="m2 abs t" style="top:133.3px;letter-spacing:-0.114px">Export to Garmin (GPXX)</div>
<div class="m2 abs t" style="top:154.6px;letter-spacing:0.147px">Export to Freshroute</div>
<div class="m2 abs t" style="top:175.8px;letter-spacing:0.089px">Export to Navigon 5</div>
<div class="m2 abs t" style="top:197.1px;letter-spacing:0.089px">Export to Navigon 6</div>
<div class="m2 abs t" style="top:218.3px;letter-spacing:0.047px">Export to Fugawi</div>
<div class="m2 abs t" style="top:239.6px;letter-spacing:0.008px">Export to LMX</div>
<div class="m2 abs t" style="top:260.8px;letter-spacing:-0.072px">Export Tracking History as CSV</div>

</div>

</body>
</html>
